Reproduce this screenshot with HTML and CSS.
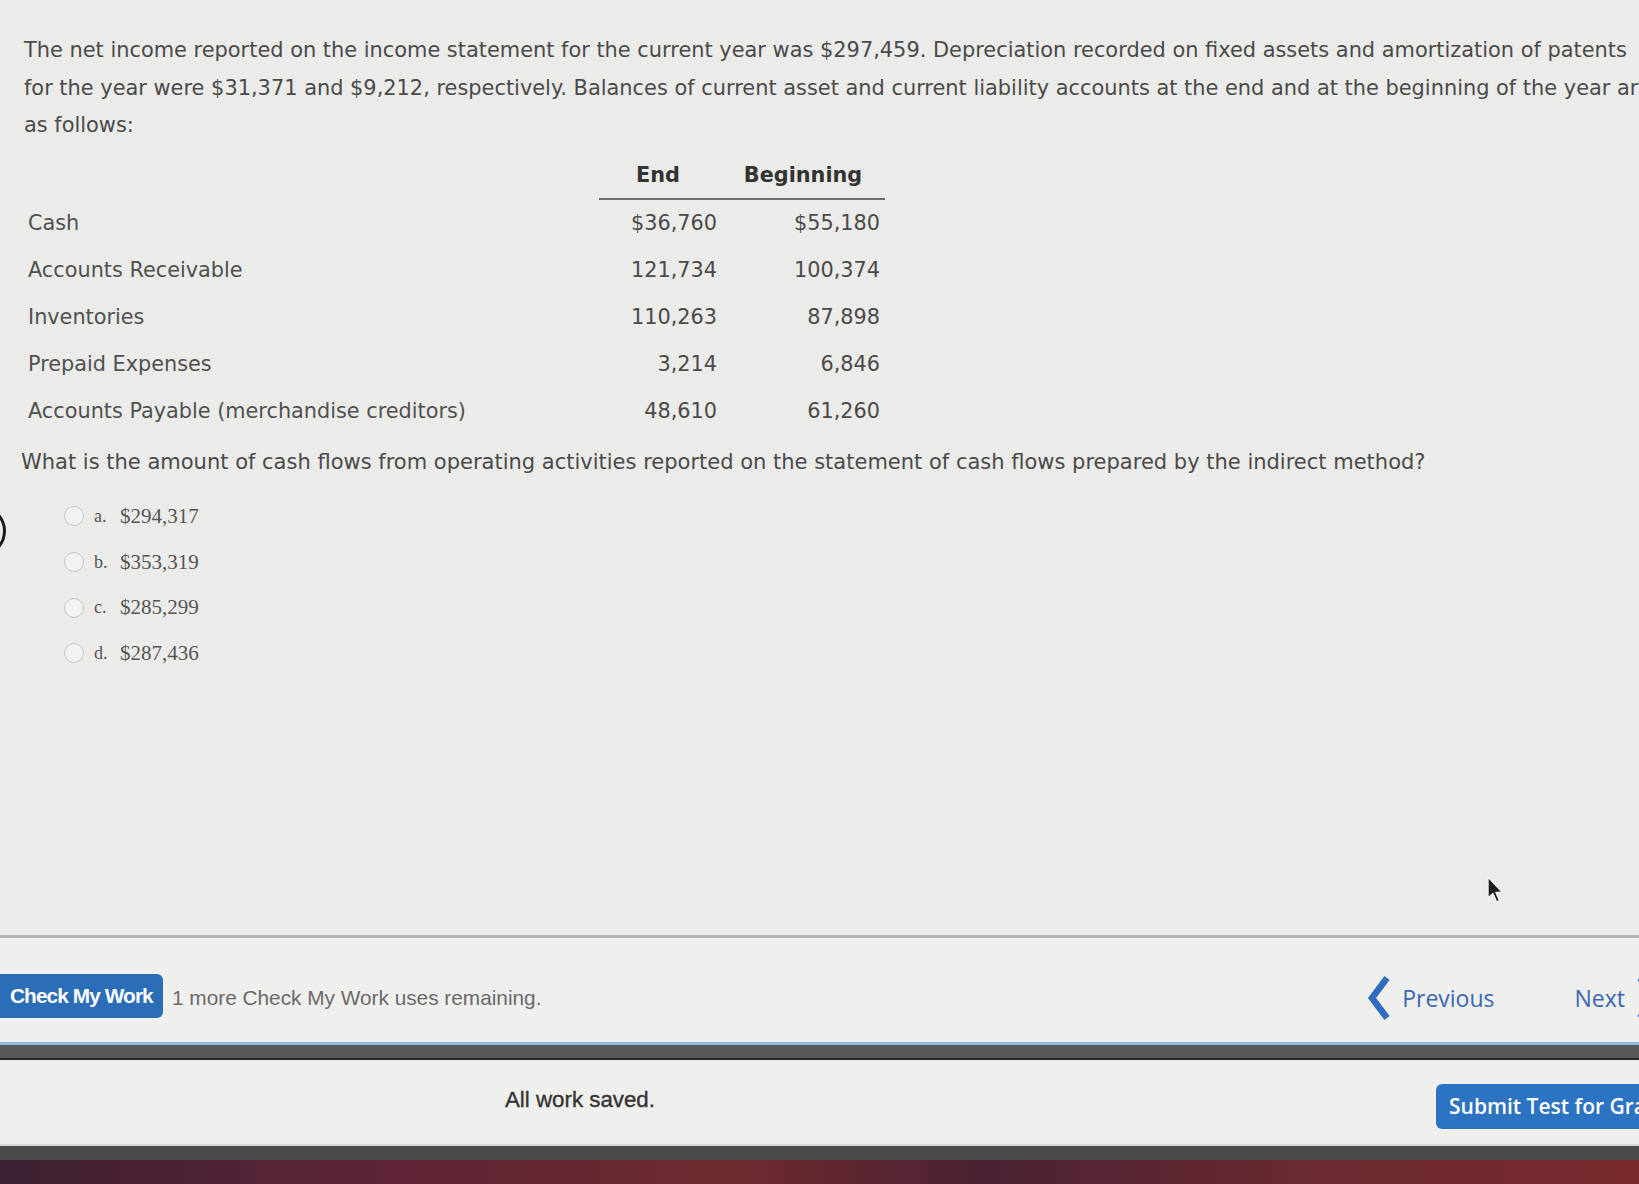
FILE: index.html
```html
<!DOCTYPE html>
<html lang="en">
<head>
<meta charset="utf-8">
<title>Question</title>
<link rel="stylesheet" href="styles.css">
</head>
<body>
<main class="content">
  <p class="intro">
    <span class="line">The net income reported on the income statement for the current year was $297,459. Depreciation recorded on fixed assets and amortization of patents</span>
    <span class="line">for the year were $31,371 and $9,212, respectively. Balances of current asset and current liability accounts at the end and at the beginning of the year are</span>
    <span class="line">as follows:</span>
  </p>

  <div class="balances">
    <div class="cell head-blank"></div>
    <div class="cell head">End</div>
    <div class="cell head">Beginning</div>

    <div class="cell label">Cash</div>
    <div class="cell num">$36,760</div>
    <div class="cell num beg">$55,180</div>

    <div class="cell label">Accounts Receivable</div>
    <div class="cell num">121,734</div>
    <div class="cell num beg">100,374</div>

    <div class="cell label">Inventories</div>
    <div class="cell num">110,263</div>
    <div class="cell num beg">87,898</div>

    <div class="cell label">Prepaid Expenses</div>
    <div class="cell num">3,214</div>
    <div class="cell num beg">6,846</div>

    <div class="cell label">Accounts Payable (merchandise creditors)</div>
    <div class="cell num">48,610</div>
    <div class="cell num beg">61,260</div>
  </div>

  <p class="question">What is the amount of cash flows from operating activities reported on the statement of cash flows prepared by the indirect method?</p>

  <ul class="options">
    <li class="option"><span class="radio"></span><span class="letter">a.</span><span class="value">$294,317</span></li>
    <li class="option"><span class="radio"></span><span class="letter">b.</span><span class="value">$353,319</span></li>
    <li class="option"><span class="radio"></span><span class="letter">c.</span><span class="value">$285,299</span></li>
    <li class="option"><span class="radio"></span><span class="letter">d.</span><span class="value">$287,436</span></li>
  </ul>

  <span class="edge-arc"></span>
  <svg class="cursor" width="18" height="28" viewBox="0 0 18 28" aria-hidden="true">
    <path d="M2 1 L2 22 L7 17.5 L10.5 26 L13.5 24.8 L10 16.5 L16.5 16.5 Z" fill="#1d1d1d" stroke="#f4f4f4" stroke-width="1.4" stroke-linejoin="round"/>
  </svg>
</main>

<section class="action-bar">
  <button class="check-btn" type="button">Check My Work</button>
  <span class="remaining">1 more Check My Work uses remaining.</span>
  <nav class="pager">
    <a class="prev" href="#">
      <svg width="26" height="46" viewBox="0 0 26 46" aria-hidden="true"><path d="M21 3 L6 23 L21 43" fill="none" stroke="#2f6cc0" stroke-width="6.5" stroke-linejoin="miter"/></svg>
      <span>Previous</span>
    </a>
    <a class="next" href="#">
      <span>Next</span>
      <svg width="26" height="46" viewBox="0 0 26 46" aria-hidden="true"><path d="M5 3 L20 23 L5 43" fill="none" stroke="#2f6cc0" stroke-width="6.5" stroke-linejoin="miter"/></svg>
    </a>
  </nav>
</section>

<div class="divider"></div>

<footer class="status-bar">
  <span class="saved">All work saved.</span>
  <button class="submit-btn" type="button">Submit Test for Grading</button>
</footer>

<div class="frame"></div>
<div class="desktop"></div>
</body>
</html>
```

FILE: styles.css
```css
* { box-sizing: border-box; }

html, body {
  margin: 0;
  padding: 0;
  width: 1639px;
  height: 1184px;
  overflow: hidden;
  background: #e9e9e7;
}

body {
  display: flex;
  flex-direction: column;
  font-family: "DejaVu Sans", Verdana, sans-serif;
  color: #4b4b4b;
}

.content {
  position: relative;
  height: 935px;
  flex: none;
  padding: 32px 0 0 24px;
  background: #ebebe9;
}

.intro {
  margin: 0;
  font-size: 20.9px;
  line-height: 37.5px;
  color: #4a4a4a;
}

.intro .line {
  display: block;
  white-space: nowrap;
}

.balances {
  display: grid;
  grid-template-columns: 571px 118px 168px;
  margin: 15px 0 0 4px;
  font-size: 20.8px;
}

.cell {
  height: 47px;
  line-height: 47px;
  white-space: nowrap;
}

.head-blank,
.head {
  height: 40px;
  line-height: 30px;
  padding-bottom: 8px;
}

.head {
  text-align: center;
  font-weight: bold;
  color: #333;
  border-bottom: 2px solid #6e6e6e;
}

.head + .head { padding-left: 4px; }

.num { text-align: right; color: #4a4a4a; }
.num.beg { padding-right: 5px; }

.label { color: #505050; }

.question {
  margin: 12px 0 0 -3px;
  font-size: 21px;
  line-height: 30px;
  white-space: nowrap;
  color: #4a4a4a;
}

.options {
  list-style: none;
  margin: 17px 0 0 40px;
  padding: 0;
  font-family: "Liberation Serif", "Times New Roman", serif;
  font-size: 21px;
  color: #555;
}

.option {
  display: flex;
  align-items: center;
  height: 45.7px;
}

.radio {
  width: 20px;
  height: 20px;
  border-radius: 50%;
  border: 1.5px solid #c4c4c4;
  background: #f2f2f0;
  margin-right: 10px;
}

.letter {
  width: 26px;
  font-size: 18px;
}

.edge-arc {
  position: absolute;
  left: -34px;
  top: 508px;
  width: 40px;
  height: 46px;
  border-radius: 50%;
  border: 3.5px solid #1a1a1a;
}

.cursor {
  position: absolute;
  left: 1486px;
  top: 876px;
}

.action-bar {
  flex: none;
  height: 110px;
  display: flex;
  align-items: center;
  padding-top: 16px;
  border-top: 3px solid #b4b4b2;
  border-bottom: 3px solid #8fbadf;
  background: #efefed;
}

.check-btn {
  height: 44px;
  padding: 0 10px 0 10px;
  width: 163px;
  border: none;
  border-radius: 0 6px 6px 0;
  background: #2c6db8;
  color: #fff;
  font-family: "Liberation Sans", Arial, sans-serif;
  font-weight: bold;
  font-size: 20.8px;
  letter-spacing: -0.9px;
  text-align: left;
  margin-top: -4px;
}

.remaining {
  margin-left: 9px;
  font-family: "Liberation Sans", Arial, sans-serif;
  font-size: 20.8px;
  color: #6a6a6a;
}

.pager {
  margin-left: auto;
  display: flex;
  align-items: center;
  gap: 80px;
  margin-right: -22px;
  font-family: "Open Sans", sans-serif;
  font-size: 23px;
}

.pager a {
  display: flex;
  align-items: center;
  gap: 10px;
  color: #3a67b2;
  text-decoration: none;
}

.divider {
  flex: none;
  height: 15px;
  background: #585856;
  border-bottom: 2px solid #2a2a2a;
}

.status-bar {
  flex: none;
  height: 84px;
  display: flex;
  align-items: center;
  padding: 0 0 0 505px;
  background: #efefed;
}

.saved {
  font-family: "Liberation Sans", Arial, sans-serif;
  font-size: 22.3px;
  color: #333;
  -webkit-text-stroke: 0.35px #333;
  margin-top: -4px;
}

.submit-btn {
  margin-left: auto;
  margin-right: -80px;
  margin-top: 8px;
  height: 45px;
  width: 283px;
  padding: 0 0 0 13px;
  text-align: left;
  border: none;
  border-radius: 6px;
  background: #2c73c2;
  color: #fff;
  font-family: "Open Sans", sans-serif;
  font-weight: 600;
  font-size: 21px;
  white-space: nowrap;
}

.frame {
  flex: none;
  height: 16px;
  background: #4b4a49;
  border-top: 2px solid #d8d8d6;
}

.desktop {
  flex: 1;
  background: linear-gradient(90deg, #3a2030 0%, #5a2438 20%, #6e2a2e 45%, #4a2234 60%, #6a2a30 80%, #7a2a2e 100%);
}
```
